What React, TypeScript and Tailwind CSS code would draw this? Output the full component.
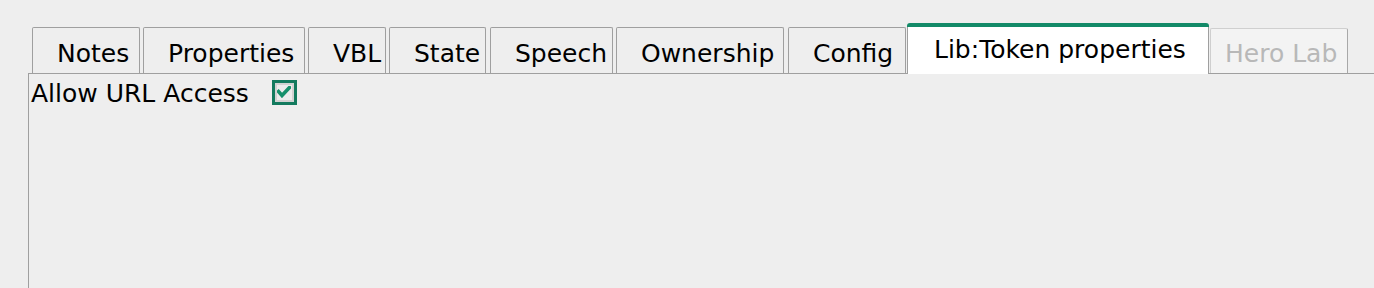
const tabs = [
  { label: 'Notes', w: 'w-[108px]', ml: 'ml-[4px]' },
  { label: 'Properties', w: 'w-[162px]', ml: 'ml-[3px]' },
  { label: 'VBL', w: 'w-[78px]', ml: 'ml-[3px]' },
  { label: 'State', w: 'w-[97px]', ml: 'ml-[3px]' },
  { label: 'Speech', w: 'w-[123px]', ml: 'ml-[4px]' },
  { label: 'Ownership', w: 'w-[168px]', ml: 'ml-[3px]' },
  { label: 'Config', w: 'w-[118px]', ml: 'ml-[4px]' },
]

function Checkbox() {
  return (
    <div className="w-[25px] h-[25px] border-[3px] border-[#137a5e] bg-[#f2f2f2]">
      <div className="w-full h-full border-2 border-[#d2d2d2] bg-[#ececec] flex items-center justify-center">
        <svg width="14" height="12" viewBox="0 0 14 12">
          <path d="M1.5 5.5 L5 9.5 L12.5 1.5" fill="none" stroke="#16906b" strokeWidth="3.6" strokeLinecap="square" />
        </svg>
      </div>
    </div>
  )
}

export default function App() {
  return (
    <div className="h-[288px] w-[1374px] bg-[#eeeeee] overflow-hidden font-['DejaVu_Sans',sans-serif] text-[25px] leading-[25px] text-black">
      <div className="ml-[28px] pt-[23px]">
        {/* tab strip */}
        <div className="flex items-end">
          {tabs.map((t) => (
            <div
              key={t.label}
              className={`${t.w} ${t.ml} h-[46px] border border-b-0 border-[#9f9f9f] rounded-t-[2px] bg-[#eeeeee] pl-[24px] pt-[13px] whitespace-nowrap`}
            >
              {t.label}
            </div>
          ))}
          <div className="relative z-10 w-[302px] ml-px h-[51px] -mb-px border-t-4 border-[#138a68] rounded-t-[3px] bg-white pl-[27px] pt-[10px] whitespace-nowrap">
            {/* side rules of selected tab */}
            <div className="absolute left-0 top-0 bottom-0 border-l border-[#9f9f9f]" />
            <div className="absolute right-0 top-0 bottom-0 border-r border-[#9f9f9f]" />
            Lib:Token properties
          </div>
          <div className="w-[138px] ml-px h-[45px] border border-b-0 border-[#cfcfcf] border-r-[#a8a8a8] rounded-t-[2px] bg-[#f3f3f3] pl-[14px] pt-[12px] text-[#b8b8b8] whitespace-nowrap">
            Hero Lab
          </div>
        </div>

        {/* content panel */}
        <div className="h-[220px] border-l border-t border-[#9f9f9f] pl-[2px] pt-[4px]">
          <div className="flex items-center">
            <span className="pt-[3px]">Allow URL Access</span>
            <div className="ml-[23px]">
              <Checkbox />
            </div>
          </div>
        </div>
      </div>
    </div>
  )
}
